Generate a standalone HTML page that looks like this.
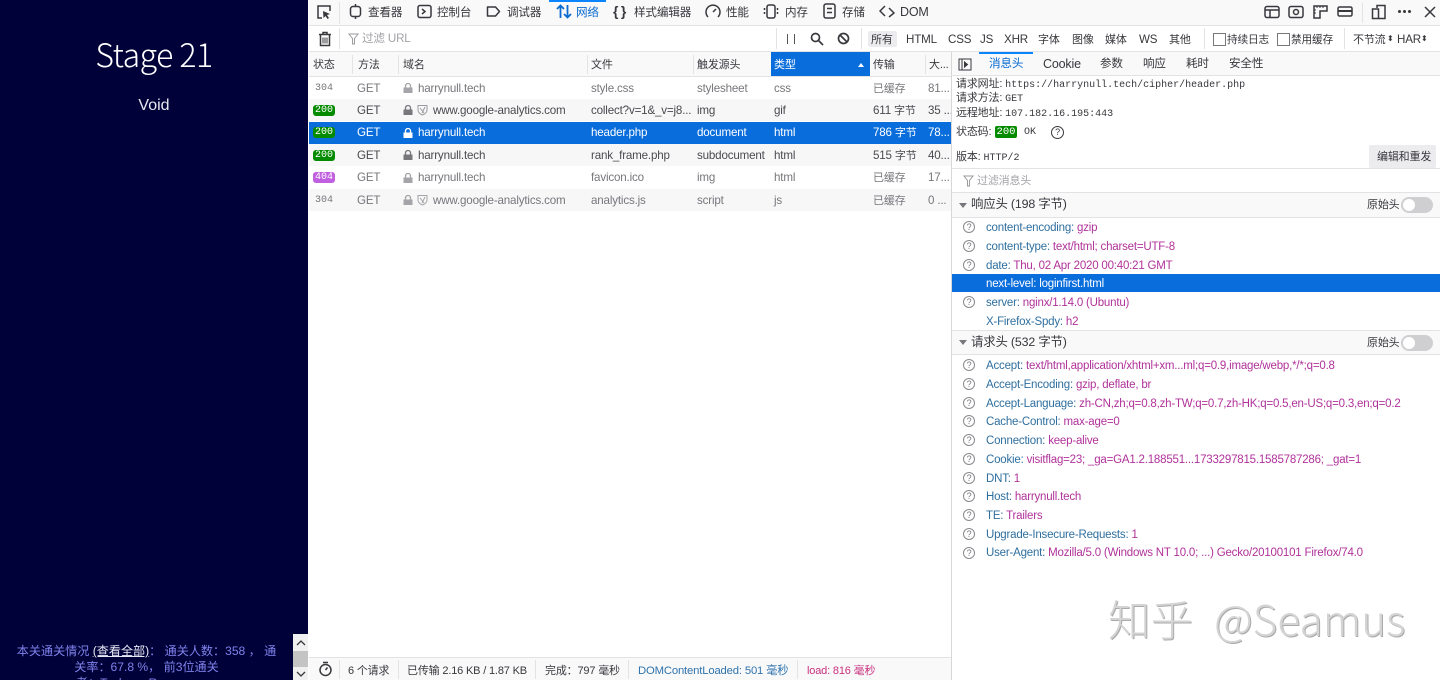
<!DOCTYPE html>
<html lang="zh-CN"><head><meta charset="utf-8"><title>Stage 21</title>
<style>
html,body{margin:0;padding:0;width:1440px;height:680px;overflow:hidden;background:#fff}
body{position:relative;font:11.6px/16px "Liberation Sans","Noto Sans CJK SC",sans-serif;letter-spacing:-.17px;color:#38383d}
div,span.a,svg.a{position:absolute}
.t{position:absolute;white-space:nowrap;line-height:16px}
.mono{font-family:"Liberation Mono","Noto Sans CJK SC",monospace;font-size:10px;letter-spacing:0}
.g{color:#77777c}.d{color:#4a4a4f}.w{color:#fff}.b{color:#0a6bd0}
.t.g,.t.d,.t.w{margin-top:1px}
.badge{position:absolute;left:313px;width:22px;height:11px;border-radius:3px;font:10px/11px "Liberation Mono",monospace;letter-spacing:0;color:#fff;text-align:center}
.k{color:#2f6f9f}.v{color:#b0329a}
.line{position:absolute;background:#e3e3e5}
svg{fill:none;stroke:#38383d;stroke-width:1.5}
.q{position:absolute;left:963px;width:10px;height:10px;border:1px solid #8a8a8f;border-radius:50%;font:9px/10px "Liberation Sans",sans-serif;color:#77777c;text-align:center}
.h{position:absolute;left:986px;margin-top:1px;white-space:nowrap;line-height:16px;font-size:11.5px;letter-spacing:-.2px}
.sw{position:absolute;left:1401px;width:32px;height:16px;border-radius:8px;background:#cfcfd2}
.sw:after{content:"";position:absolute;left:2px;top:2px;width:12px;height:12px;border-radius:50%;background:#fff}
.cb{position:absolute;top:33px;width:11px;height:11px;border:1px solid #77777c;background:#fff}
.wm{position:absolute;white-space:nowrap;top:592px;font-family:'Noto Sans CJK SC','Liberation Sans',sans-serif;font-weight:300;letter-spacing:0;font-size:42.500px;line-height:54px;color:#d4d4d4;text-shadow:1px 1px 0 #aaa}
</style></head><body>

<!-- left page -->
<div style="left:0;top:0;width:308px;height:680px;background:#01013a"></div>
<div class="t" style="left:0;top:33px;width:308px;text-align:center;font-family:'Noto Sans CJK SC','Liberation Sans',sans-serif;font-weight:300;letter-spacing:-.5px;font-size:32px;line-height:42px;color:#fff">Stage 21</div>
<div class="t" style="left:0;top:96px;width:308px;text-align:center;font-size:16px;line-height:20px;letter-spacing:0;color:#e8e8ee">Void</div>
<div style="left:0;top:643px;width:293px;height:37px;overflow:hidden;text-align:center;color:#7f82ea;font-size:12.1px;letter-spacing:0;line-height:16px;white-space:nowrap">本关通关情况 <span style="color:#e8e8f4;text-decoration:underline">(查看全部)</span>： 通关人数：358 ， 通<br>关率：67.8 %， 前3位通关<br>者：Tsubasa Rose,rayuan</div>
<div style="left:293px;top:634px;width:15px;height:46px;background:#f0f0f0"></div>
<div style="left:293px;top:651px;width:15px;height:16px;background:#c4c4c4"></div>
<svg class="a" style="left:296px;top:639px;stroke-width:1.3" width="10" height="8"><path d="M1 6l4-4 4 4"/></svg>
<svg class="a" style="left:296px;top:670px;stroke-width:1.3" width="10" height="8"><path d="M1 2l4 4 4-4"/></svg>

<!-- top toolbar -->
<div style="left:309px;top:0;width:1131px;height:25px;background:#f9f9fa"></div>
<div class="line" style="left:309px;top:25px;width:1131px;height:1px"></div>
<div class="line" style="left:339px;top:2px;width:1px;height:22px"></div>
<svg class="a" style="left:316px;top:4px" width="16" height="16"><path d="M6 14H2V2h12v5"/><path d="M7 7l7 3-3 1 2 3-1.500 1-2-3-2 2z" fill="#38383d" stroke="none"/></svg>
<svg class="a" style="left:348px;top:4px" width="15" height="15"><rect x="2.500" y="2.500" width="10" height="10" rx="2.500"/><path d="M7.500 0v2.500M7.500 12.500v2.500"/></svg>
<span class="t" style="left:368px;top:5px">查看器</span>
<svg class="a" style="left:417px;top:4px" width="15" height="15"><rect x="1" y="1.500" width="13" height="12" rx="2"/><path d="M5 5l3 2.500L5 10"/></svg>
<span class="t" style="left:437px;top:5px">控制台</span>
<svg class="a" style="left:486px;top:4px" width="15" height="15"><path d="M1.500 3h8l4 4.500-4 4.500h-8z" stroke-linejoin="round"/></svg>
<span class="t" style="left:507px;top:5px">调试器</span>
<div style="left:549px;top:0;width:57px;height:2px;background:#0a84ff"></div>
<svg class="a" style="left:556px;top:4px;stroke:#0a6bd0;stroke-width:1.800" width="16" height="15"><path d="M4.500 14V2M1 5l3.500-3.500L8 5M11.500 1v12M8 10l3.500 3.500L15 10"/></svg>
<span class="t b" style="left:576px;top:5px">网络</span>
<span class="t" style="left:613px;top:3px;font-size:14px;font-weight:bold">{&thinsp;}</span>
<span class="t" style="left:634px;top:5px">样式编辑器</span>
<svg class="a" style="left:705px;top:4px" width="16" height="15"><path d="M3 13A7 7 0 1 1 13 13"/><path d="M8 8l3-3"/></svg>
<span class="t" style="left:726px;top:5px">性能</span>
<svg class="a" style="left:763px;top:4px" width="16" height="15"><rect x="4" y="1" width="8" height="13" rx="2"/><path d="M1.500 4v2M1.500 8v2M14.500 4v2M14.500 8v2"/></svg>
<span class="t" style="left:785px;top:5px">内存</span>
<svg class="a" style="left:822px;top:3px" width="15" height="16"><rect x="2" y="1" width="11" height="14" rx="2"/><path d="M5 5.500h5M5 9.500h5"/></svg>
<span class="t" style="left:842px;top:5px">存储</span>
<svg class="a" style="left:879px;top:4px" width="16" height="15"><path d="M6 2L1 7l5 5M10 4l5 5-5 4"/></svg>
<span class="t" style="left:900px;top:4px;font-size:12.500px">DOM</span>

<svg class="a" style="left:1264px;top:5px" width="16" height="14"><rect x="1" y="1.500" width="14" height="11" rx="2"/><path d="M1 5h14M6 5v7"/></svg>
<svg class="a" style="left:1288px;top:5px" width="16" height="14"><rect x="1" y="1.500" width="14" height="11" rx="2"/><circle cx="8" cy="7" r="2.500"/></svg>
<svg class="a" style="left:1313px;top:4px" width="16" height="15"><path d="M1 2h13v5H7v7H1z"/><path d="M4 2v2M7 2v2M10 2v2M1 6h2M1 9h2" stroke-width="1"/></svg>
<svg class="a" style="left:1337px;top:6px" width="16" height="12"><rect x="1" y="1" width="14" height="9" rx="1.500"/><path d="M1 5h14" stroke-width="2"/></svg>
<div class="line" style="left:1362px;top:3px;width:1px;height:20px"></div>
<svg class="a" style="left:1371px;top:4px" width="16" height="16"><path d="M6 4V1.500h8v13H8"/><rect x="1.500" y="5" width="6" height="9.500"/></svg>
<div style="left:1398px;top:10px;width:3px;height:3px;border-radius:50%;background:#38383d;box-shadow:5px 0 #38383d,10px 0 #38383d"></div>
<svg class="a" style="left:1423px;top:5px" width="14" height="14"><path d="M2 2l10 10M12 2L2 12"/></svg>

<!-- filter toolbar -->
<div style="left:309px;top:26px;width:1131px;height:25px;background:#fff"></div>
<div class="line" style="left:309px;top:51px;width:1131px;height:1px"></div>
<svg class="a" style="left:318px;top:31px" width="14" height="16"><path d="M1 3.500h12M5 3V1.500h4V3M2.500 4v10.500h9V4"/><path d="M5 6.500v6M7 6.500v6M9 6.500v6" stroke-width="1"/></svg>
<div class="line" style="left:339px;top:28px;width:1px;height:21px"></div>
<svg class="a" style="left:348px;top:33px;stroke:#9a9a9f;stroke-width:1" width="11" height="12"><path d="M1 1h9L6.500 5.500V11h-2V5.500z"/></svg>
<span class="t" style="left:362px;top:31px;color:#a3a3a8">过滤 URL</span>
<div class="line" style="left:776px;top:28px;width:1px;height:21px"></div>
<div style="left:787px;top:34px;width:1px;height:10px;background:#55555a"></div>
<div style="left:794px;top:34px;width:1px;height:10px;background:#55555a"></div>
<svg class="a" style="left:810px;top:32px;stroke-width:1.700" width="14" height="14"><circle cx="5.500" cy="5.500" r="4"/><path d="M8.500 8.500L13 13"/></svg>
<svg class="a" style="left:837px;top:32px;stroke-width:1.700" width="13" height="13"><circle cx="6.500" cy="6.500" r="5"/><path d="M3 3l7 7"/></svg>
<div class="line" style="left:861px;top:28px;width:1px;height:21px"></div>
<div style="left:868px;top:31px;width:29px;height:16px;background:#ececee;border-radius:2px"></div>
<span class="t" style="left:871px;top:32px;font-size:11px">所有</span>
<span class="t" style="left:906px;top:32px">HTML</span>
<span class="t" style="left:948px;top:32px">CSS</span>
<span class="t" style="left:980px;top:32px">JS</span>
<span class="t" style="left:1004px;top:32px">XHR</span>
<span class="t" style="left:1038px;top:32px;font-size:11px">字体</span>
<span class="t" style="left:1072px;top:32px;font-size:11px">图像</span>
<span class="t" style="left:1105px;top:32px;font-size:11px">媒体</span>
<span class="t" style="left:1139px;top:32px">WS</span>
<span class="t" style="left:1169px;top:32px;font-size:11px">其他</span>
<div class="line" style="left:1204px;top:28px;width:1px;height:21px"></div>
<div class="cb" style="left:1213px"></div><span class="t" style="left:1227px;top:32px;font-size:10.700px">持续日志</span>
<div class="cb" style="left:1277px"></div><span class="t" style="left:1291px;top:32px;font-size:10.700px">禁用缓存</span>
<div class="line" style="left:1344px;top:28px;width:1px;height:21px"></div>
<span class="t" style="left:1353px;top:32px;font-size:11px">不节流</span>
<span class="t" style="left:1387px;top:31px;font-size:8px">⬍</span>
<span class="t" style="left:1397px;top:32px">HAR</span>
<span class="t" style="left:1421px;top:31px;font-size:8px">⬍</span>

<!-- table header -->
<div style="left:309px;top:52px;width:642px;height:25px;background:#f9f9fa"></div>
<div class="line" style="left:309px;top:76px;width:642px;height:1px"></div>
<div style="left:771px;top:52px;width:99px;height:24px;background:#0a6ddc"></div>
<div class="line" style="left:352px;top:55px;width:1px;height:19px"></div>
<div class="line" style="left:398px;top:55px;width:1px;height:19px"></div>
<div class="line" style="left:587px;top:55px;width:1px;height:19px"></div>
<div class="line" style="left:693px;top:55px;width:1px;height:19px"></div>
<div class="line" style="left:925px;top:55px;width:1px;height:19px"></div>
<span class="t" style="left:313px;top:57px;font-size:11px">状态</span>
<span class="t" style="left:358px;top:57px;font-size:11px">方法</span>
<span class="t" style="left:403px;top:57px;font-size:11px">域名</span>
<span class="t" style="left:591px;top:57px;font-size:11px">文件</span>
<span class="t" style="left:697px;top:57px;font-size:11px">触发源头</span>
<span class="t w" style="left:774px;top:56px;font-size:11px">类型</span>
<span class="a" style="left:858px;top:63px;width:0;height:0;border-left:3px solid transparent;border-right:3px solid transparent;border-bottom:4px solid #fff"></span>
<span class="t" style="left:873px;top:57px;font-size:11px">传输</span>
<span class="t" style="left:929px;top:57px;font-size:11px">大...</span>

<!-- rows -->
<div style="left:309px;top:99px;width:642px;height:22px;background:#f7f7f8"></div>
<div style="left:309px;top:122px;width:642px;height:22px;background:#0a6ddc"></div>
<div style="left:309px;top:144px;width:642px;height:22px;background:#f7f7f8"></div>
<div style="left:309px;top:189px;width:642px;height:22px;background:#f7f7f8"></div>

<!-- row 1 -->
<span class="t mono g" style="left:315px;top:80px">304</span>
<span class="t g" style="left:357px;top:80px">GET</span>
<svg class="a" style="left:403px;top:83px;stroke:none" width="10" height="10"><path d="M0.500 4.500h9v5.500h-9z" fill="#a5a5a9"/><path d="M2.500 4.500V3a2.500 2.500 0 0 1 5 0v1.500" stroke="#a5a5a9" stroke-width="1.300"/></svg>
<span class="t g" style="left:418px;top:80px">harrynull.tech</span>
<span class="t g" style="left:591px;top:80px">style.css</span>
<span class="t g" style="left:697px;top:80px">stylesheet</span>
<span class="t g" style="left:774px;top:80px">css</span>
<span class="t g" style="left:873px;top:80px;font-size:11px">已缓存</span>
<span class="t g" style="left:928px;top:80px">81...</span>
<!-- row 2 -->
<div class="badge" style="top:105px;background:#058b00">200</div>
<span class="t d" style="left:357px;top:102px">GET</span>
<svg class="a" style="left:403px;top:105px;stroke:none" width="10" height="10"><path d="M0.500 4.500h9v5.500h-9z" fill="#77777c"/><path d="M2.500 4.500V3a2.500 2.500 0 0 1 5 0v1.500" stroke="#77777c" stroke-width="1.300"/></svg>
<svg class="a" style="left:417px;top:104px;stroke:#9a9a9f;stroke-width:1" width="11" height="12"><path d="M1 1.500h9V6c0 2.500-2 4-4.500 5C3 10 1 8.500 1 6zM3 4l4 5M8 3L5 9"/></svg>
<span class="t d" style="left:433px;top:102px">www.google-analytics.com</span>
<span class="t d" style="left:591px;top:102px">collect?v=1&amp;_v=j8...</span>
<span class="t d" style="left:697px;top:102px">img</span>
<span class="t d" style="left:774px;top:102px">gif</span>
<span class="t d" style="left:873px;top:102px">611 <span style="font-size:11px">字节</span></span>
<span class="t d" style="left:928px;top:102px">35 ...</span>
<!-- row 3 -->
<div class="badge" style="top:127px;background:#058b00">200</div>
<span class="t w" style="left:357px;top:124px">GET</span>
<svg class="a" style="left:403px;top:128px;stroke:none" width="10" height="10"><path d="M0.500 4.500h9v5.500h-9z" fill="#fff"/><path d="M2.500 4.500V3a2.500 2.500 0 0 1 5 0v1.500" stroke="#fff" stroke-width="1.300"/></svg>
<span class="t w" style="left:418px;top:124px">harrynull.tech</span>
<span class="t w" style="left:591px;top:124px">header.php</span>
<span class="t w" style="left:697px;top:124px">document</span>
<span class="t w" style="left:774px;top:124px">html</span>
<span class="t w" style="left:873px;top:124px">786 <span style="font-size:11px">字节</span></span>
<span class="t w" style="left:928px;top:124px">78...</span>
<!-- row 4 -->
<div class="badge" style="top:150px;background:#058b00">200</div>
<span class="t d" style="left:357px;top:147px">GET</span>
<svg class="a" style="left:403px;top:150px;stroke:none" width="10" height="10"><path d="M0.500 4.500h9v5.500h-9z" fill="#77777c"/><path d="M2.500 4.500V3a2.500 2.500 0 0 1 5 0v1.500" stroke="#77777c" stroke-width="1.300"/></svg>
<span class="t d" style="left:418px;top:147px">harrynull.tech</span>
<span class="t d" style="left:591px;top:147px">rank_frame.php</span>
<span class="t d" style="left:697px;top:147px">subdocument</span>
<span class="t d" style="left:774px;top:147px">html</span>
<span class="t d" style="left:873px;top:147px">515 <span style="font-size:11px">字节</span></span>
<span class="t d" style="left:928px;top:147px">40...</span>
<!-- row 5 -->
<div class="badge" style="top:172px;background:#c060e0">404</div>
<span class="t g" style="left:357px;top:169px">GET</span>
<svg class="a" style="left:403px;top:173px;stroke:none" width="10" height="10"><path d="M0.500 4.500h9v5.500h-9z" fill="#a5a5a9"/><path d="M2.500 4.500V3a2.500 2.500 0 0 1 5 0v1.500" stroke="#a5a5a9" stroke-width="1.300"/></svg>
<span class="t g" style="left:418px;top:169px">harrynull.tech</span>
<span class="t g" style="left:591px;top:169px">favicon.ico</span>
<span class="t g" style="left:697px;top:169px">img</span>
<span class="t g" style="left:774px;top:169px">html</span>
<span class="t g" style="left:873px;top:169px;font-size:11px">已缓存</span>
<span class="t g" style="left:928px;top:169px">17...</span>
<!-- row 6 -->
<span class="t mono g" style="left:315px;top:192px">304</span>
<span class="t g" style="left:357px;top:192px">GET</span>
<svg class="a" style="left:403px;top:195px;stroke:none" width="10" height="10"><path d="M0.500 4.500h9v5.500h-9z" fill="#a5a5a9"/><path d="M2.500 4.500V3a2.500 2.500 0 0 1 5 0v1.500" stroke="#a5a5a9" stroke-width="1.300"/></svg>
<svg class="a" style="left:417px;top:194px;stroke:#a5a5a9;stroke-width:1" width="11" height="12"><path d="M1 1.500h9V6c0 2.500-2 4-4.500 5C3 10 1 8.500 1 6zM3 4l4 5M8 3L5 9"/></svg>
<span class="t g" style="left:433px;top:192px">www.google-analytics.com</span>
<span class="t g" style="left:591px;top:192px">analytics.js</span>
<span class="t g" style="left:697px;top:192px">script</span>
<span class="t g" style="left:774px;top:192px">js</span>
<span class="t g" style="left:873px;top:192px;font-size:11px">已缓存</span>
<span class="t g" style="left:928px;top:192px">0 ...</span>

<!-- status bar -->
<div class="line" style="left:309px;top:657px;width:642px;height:1px"></div>
<div style="left:309px;top:658px;width:642px;height:22px;background:#f9f9fa"></div>
<svg class="a" style="left:318px;top:661px;stroke-width:1.500" width="15" height="16"><circle cx="7.500" cy="9" r="5.500"/><path d="M5 1.500h5M7.500 9l2-2.500"/></svg>
<div class="line" style="left:339px;top:660px;width:1px;height:19px"></div>
<span class="t" style="left:348px;top:663px;font-size:11px">6 个请求</span>
<div class="line" style="left:398px;top:660px;width:1px;height:19px"></div>
<span class="t" style="left:407px;top:663px;font-size:11px">已传输 2.16 KB / 1.87 KB</span>
<div class="line" style="left:535px;top:660px;width:1px;height:19px"></div>
<span class="t" style="left:545px;top:663px;font-size:11px">完成：797 毫秒</span>
<div class="line" style="left:628px;top:660px;width:1px;height:19px"></div>
<span class="t" style="left:638px;top:663px;color:#2f73ad;font-size:11.300px">DOMContentLoaded: 501 毫秒</span>
<div class="line" style="left:797px;top:660px;width:1px;height:19px"></div>
<span class="t" style="left:807px;top:663px;color:#c8327e;font-size:11px">load: 816 毫秒</span>

<!-- details panel -->
<div style="left:951px;top:52px;width:1px;height:628px;background:#d7d7db"></div>
<div style="left:952px;top:52px;width:488px;height:24px;background:#f9f9fa"></div>
<div class="line" style="left:952px;top:75px;width:488px;height:1px"></div>
<svg class="a" style="left:958px;top:58px;stroke-width:1" width="14" height="13"><rect x="1" y="1" width="12" height="11"/><path d="M4 1v11"/><path d="M6.500 4l3 2.500-3 2.500z" fill="#38383d"/></svg>
<div style="left:979px;top:52px;width:54px;height:2px;background:#0a84ff"></div>
<span class="t b" style="left:989px;top:56px">消息头</span>
<span class="t" style="left:1043px;top:56px;font-size:12.500px">Cookie</span>
<span class="t" style="left:1100px;top:56px">参数</span>
<span class="t" style="left:1143px;top:56px">响应</span>
<span class="t" style="left:1186px;top:56px">耗时</span>
<span class="t" style="left:1229px;top:56px">安全性</span>

<span class="t" style="left:956px;top:76px;font-size:11px">请求网址: <span class="mono">https://harrynull.tech/cipher/header.php</span></span>
<span class="t" style="left:956px;top:90px;font-size:11px">请求方法: <span class="mono">GET</span></span>
<span class="t" style="left:956px;top:105px;font-size:11px">远程地址: <span class="mono">107.182.16.195:443</span></span>
<span class="t" style="left:956px;top:124px;font-size:11px">状态码:</span>
<div style="left:995px;top:126px;width:22px;height:12px;border-radius:2px;background:#058b00;color:#fff;font:10.500px/12px 'Liberation Mono',monospace;letter-spacing:0;text-align:center">200</div>
<span class="t mono" style="left:1024px;top:125px">OK</span>
<div class="q" style="left:1051px;top:126px;width:11px;height:11px;border:1px solid #38383d;color:#38383d;line-height:11px">?</div>
<span class="t" style="left:956px;top:149px;font-size:11px">版本: <span class="mono">HTTP/2</span></span>
<div style="left:1369px;top:145px;width:67px;height:23px;background:#ececee;border-radius:2px"></div>
<span class="t" style="left:1377px;top:149px;font-size:11px">编辑和重发</span>
<div class="line" style="left:952px;top:168px;width:488px;height:1px"></div>
<svg class="a" style="left:963px;top:175px;stroke:#9a9a9f;stroke-width:1" width="11" height="12"><path d="M1 1h9L6.500 5.500V11h-2V5.500z"/></svg>
<span class="t" style="left:977px;top:173px;font-size:11px;color:#a3a3a8">过滤消息头</span>
<div class="line" style="left:952px;top:192px;width:488px;height:1px"></div>

<div style="left:952px;top:193px;width:488px;height:24px;background:#f9f9fa"></div>
<div class="line" style="left:952px;top:217px;width:488px;height:1px"></div>
<span class="a" style="left:959px;top:203px;width:0;height:0;border-left:4px solid transparent;border-right:4px solid transparent;border-top:5px solid #77777c"></span>
<span class="t" style="left:971px;top:196px;font-size:12.400px">响应头 (198 字节)</span>
<span class="t" style="left:1367px;top:197px;font-size:11px">原始头</span>
<div class="sw" style="top:197px"></div>

<div class="q" style="top:221px">?</div><span class="h" style="top:219px"><span class="k">content-encoding:</span> <span class="v">gzip</span></span>
<div class="q" style="top:240px">?</div><span class="h" style="top:238px"><span class="k">content-type:</span> <span class="v">text/html; charset=UTF-8</span></span>
<div class="q" style="top:259px">?</div><span class="h" style="top:257px"><span class="k">date:</span> <span class="v">Thu, 02 Apr 2020 00:40:21 GMT</span></span>
<div style="left:952px;top:274px;width:488px;height:18px;background:#0a6ddc"></div>
<span class="h" style="top:275px;color:#fff">next-level: loginfirst.html</span>
<div class="q" style="top:296px">?</div><span class="h" style="top:294px"><span class="k">server:</span> <span class="v">nginx/1.14.0 (Ubuntu)</span></span>
<span class="h" style="top:313px"><span class="k">X-Firefox-Spdy:</span> <span class="v">h2</span></span>

<div class="line" style="left:952px;top:330px;width:488px;height:1px"></div>
<div style="left:952px;top:331px;width:488px;height:23px;background:#f9f9fa"></div>
<div class="line" style="left:952px;top:354px;width:488px;height:1px"></div>
<span class="a" style="left:959px;top:340px;width:0;height:0;border-left:4px solid transparent;border-right:4px solid transparent;border-top:5px solid #77777c"></span>
<span class="t" style="left:971px;top:334px;font-size:12.400px">请求头 (532 字节)</span>
<span class="t" style="left:1367px;top:335px;font-size:11px">原始头</span>
<div class="sw" style="top:335px"></div>

<div class="q" style="top:359px">?</div><span class="h" style="top:357px"><span class="k">Accept:</span> <span class="v">text/html,application/xhtml+xm...ml;q=0.9,image/webp,*/*;q=0.8</span></span>
<div class="q" style="top:378px">?</div><span class="h" style="top:376px"><span class="k">Accept-Encoding:</span> <span class="v">gzip, deflate, br</span></span>
<div class="q" style="top:397px">?</div><span class="h" style="top:395px"><span class="k">Accept-Language:</span> <span class="v">zh-CN,zh;q=0.8,zh-TW;q=0.7,zh-HK;q=0.5,en-US;q=0.3,en;q=0.2</span></span>
<div class="q" style="top:415px">?</div><span class="h" style="top:413px"><span class="k">Cache-Control:</span> <span class="v">max-age=0</span></span>
<div class="q" style="top:434px">?</div><span class="h" style="top:432px"><span class="k">Connection:</span> <span class="v">keep-alive</span></span>
<div class="q" style="top:453px">?</div><span class="h" style="top:451px"><span class="k">Cookie:</span> <span class="v">visitflag=23; _ga=GA1.2.188551...1733297815.1585787286; _gat=1</span></span>
<div class="q" style="top:472px">?</div><span class="h" style="top:470px"><span class="k">DNT:</span> <span class="v">1</span></span>
<div class="q" style="top:490px">?</div><span class="h" style="top:488px"><span class="k">Host:</span> <span class="v">harrynull.tech</span></span>
<div class="q" style="top:509px">?</div><span class="h" style="top:507px"><span class="k">TE:</span> <span class="v">Trailers</span></span>
<div class="q" style="top:528px">?</div><span class="h" style="top:526px"><span class="k">Upgrade-Insecure-Requests:</span> <span class="v">1</span></span>
<div class="q" style="top:547px">?</div><span class="h" style="top:544px"><span class="k">User-Agent:</span> <span class="v">Mozilla/5.0 (Windows NT 10.0; ...) Gecko/20100101 Firefox/74.0</span></span>

<!-- watermark -->
<div class="wm" style="left:1108px">知乎</div>
<div class="wm" style="left:1214px">@Seamus</div>
</body></html>
